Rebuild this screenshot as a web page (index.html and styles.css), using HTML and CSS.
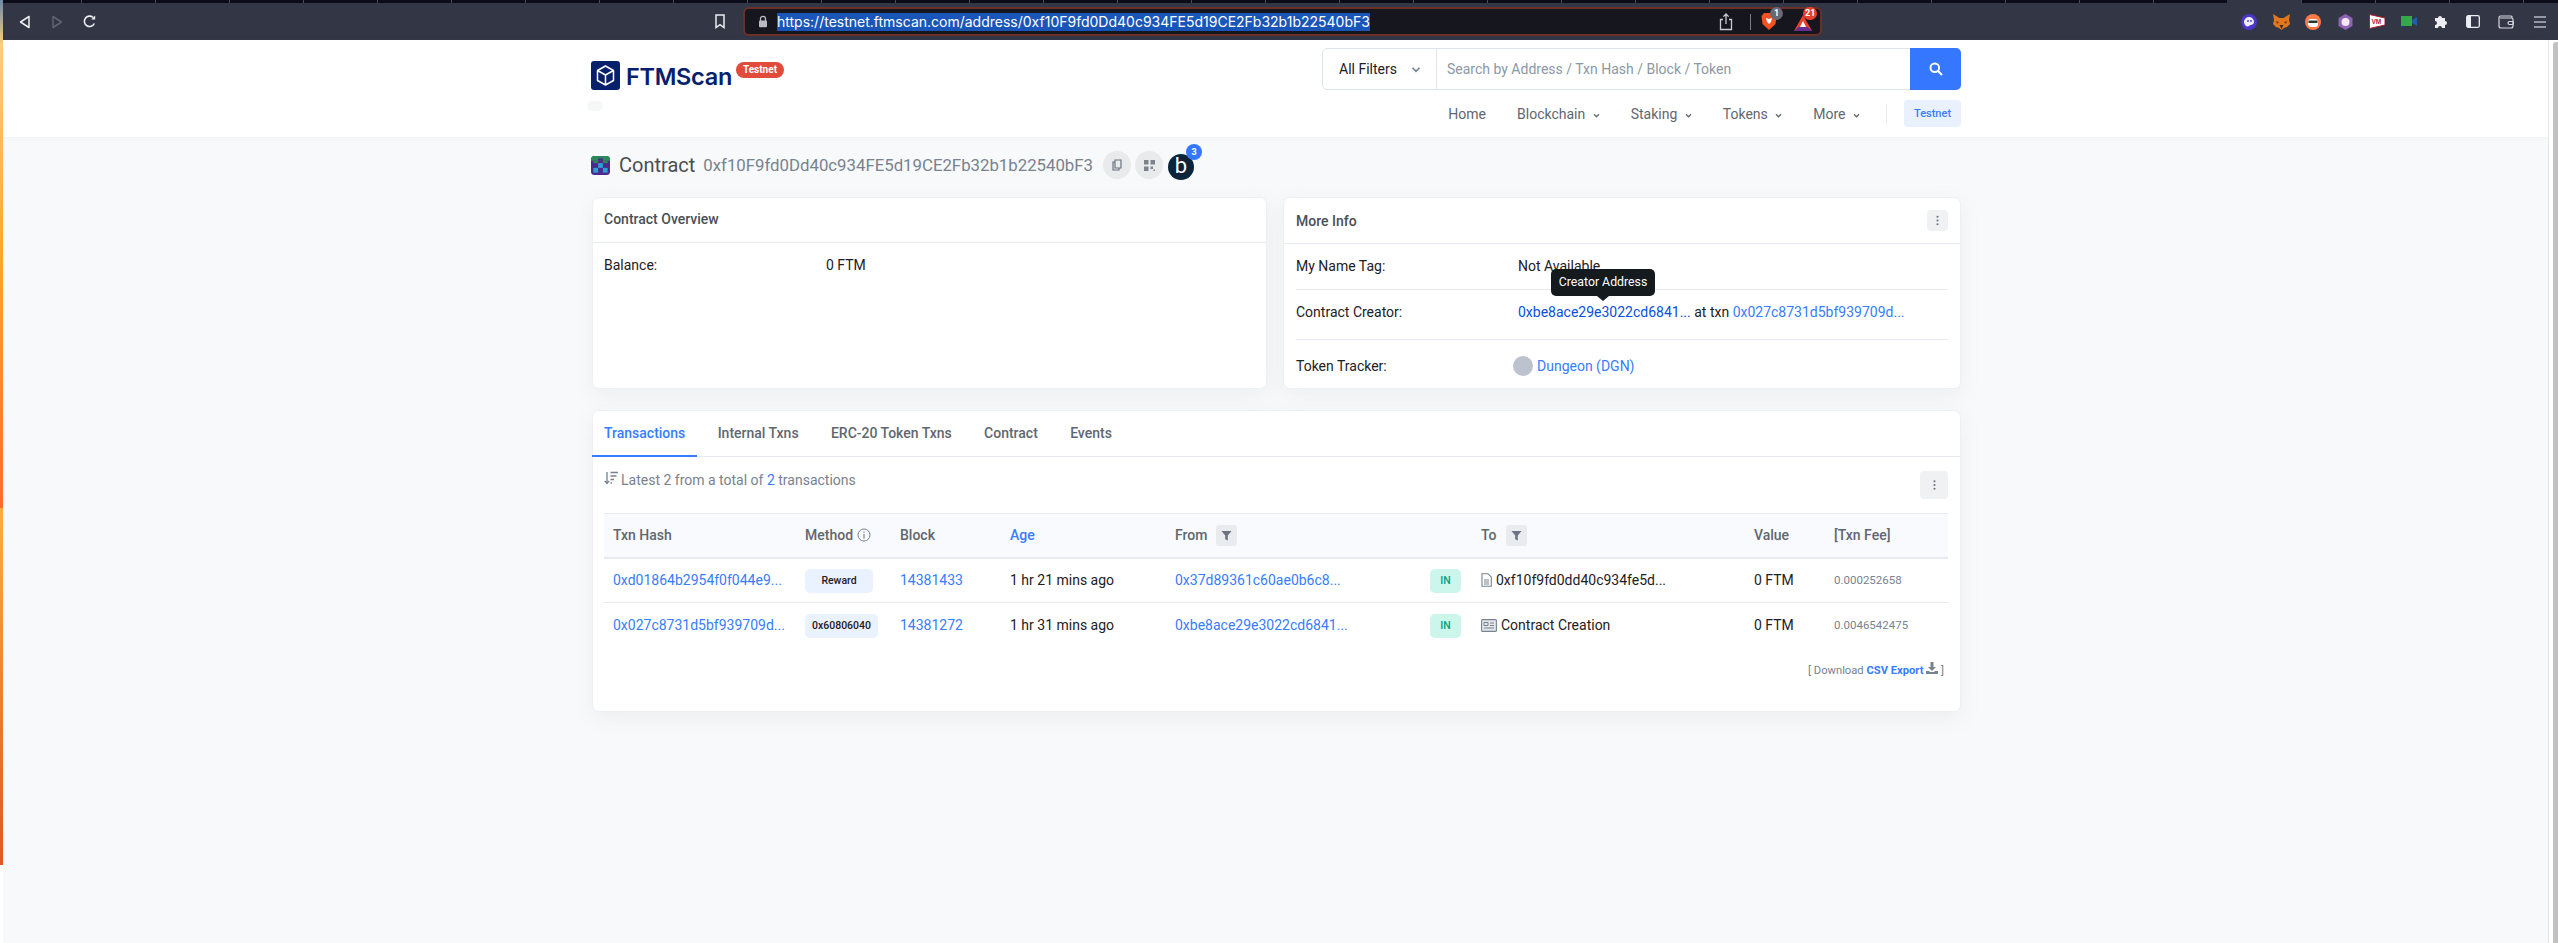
FILE: index.html
```html
<!DOCTYPE html>
<html lang="en">
<head>
  <meta charset="UTF-8">
  <title>FTMScan Testnet - Contract</title>
  <link rel="stylesheet" href="styles.css">
</head>
<body>
  <svg class="defs" width="0" height="0">
    <symbol id="chev" viewBox="0 0 8 6"><path d="M1 1.5l3 3 3-3" fill="none" stroke="currentColor" stroke-width="1.5"/></symbol>
    <symbol id="kebab" viewBox="0 0 4 14"><circle cx="2" cy="2" r="1.4" fill="currentColor"/><circle cx="2" cy="7" r="1.4" fill="currentColor"/><circle cx="2" cy="12" r="1.4" fill="currentColor"/></symbol>
    <symbol id="filter" viewBox="0 0 12 12"><path d="M.5 1h11L7.4 6v5.5L4.6 10V6z" fill="currentColor"/></symbol>
  </svg>

  <div class="wallpaper"></div>

  <div class="browser">
    <!-- browser chrome -->
    <div class="tabstrip"><div class="tab-active"></div></div>
    <div class="toolbar">
      <button class="tool-btn"><svg width="14" height="14" viewBox="0 0 14 14"><path d="M11 1.5v11L2.5 7z" fill="none" stroke="#eceef2" stroke-width="1.5" stroke-linejoin="round"/></svg></button>
      <button class="tool-btn"><svg width="14" height="14" viewBox="0 0 14 14"><path d="M3 1.5v11L11.5 7z" fill="none" stroke="#5f6372" stroke-width="1.5" stroke-linejoin="round"/></svg></button>
      <button class="tool-btn"><svg width="15" height="15" viewBox="0 0 15 15"><path d="M12.3 9.5A5.2 5.2 0 1 1 11 3.4" fill="none" stroke="#eceef2" stroke-width="1.6"/><path d="M9.2 5.4h4V1.6z" fill="#eceef2"/></svg></button>
      <button class="tool-btn bookmark"><svg width="12" height="15" viewBox="0 0 12 15"><path d="M2 1h8v12.5L6 10.6 2 13.5z" fill="none" stroke="#eceef2" stroke-width="1.5"/></svg></button>

      <div class="urlbar">
        <svg class="lock" width="10" height="13" viewBox="0 0 10 13"><path d="M2.5 6V3.8a2.5 2.5 0 0 1 5 0V6" fill="none" stroke="#b9bcc5" stroke-width="1.3"/><rect x="1" y="5.6" width="8" height="6.6" rx="1" fill="#b9bcc5"/></svg>
        <span class="url-text">https://testnet.ftmscan.com/address/0xf10F9fd0Dd40c934FE5d19CE2Fb32b1b22540bF3</span>
        <svg class="url-share" width="14" height="18" viewBox="0 0 14 18"><path d="M4 6.5H1.5v10h11v-10H10" fill="none" stroke="#c9ccd3" stroke-width="1.3"/><path d="M7 1v10M4.4 3.6L7 1l2.6 2.6" fill="none" stroke="#c9ccd3" stroke-width="1.3"/></svg>
        <span class="url-sep"></span>
        <span class="shield">
          <svg width="16" height="19" viewBox="0 0 16 19"><path d="M3 1h10l2.5 3-1 8L8 18 1.500 12l-1-8z" fill="#f1521f"/><path d="M5 6l3 1 3-1-1 4-2 2-2-2z" fill="#fff"/></svg>
          <span class="count count-grey">1</span>
        </span>
        <span class="bat">
          <svg width="18" height="16" viewBox="0 0 18 16"><path d="M9 0l9 16H0z" fill="#e8402f"/><path d="M0 16l4.500-4h9l4.500 4z" fill="#662d91"/><path d="M9 6l3 6H6z" fill="#fff"/></svg>
          <span class="count count-red">21</span>
        </span>
      </div>

      <div class="extensions">
        <span class="ext"><svg width="16" height="16" viewBox="0 0 16 16"><circle cx="8" cy="8" r="8" fill="#4c35c9"/><path d="M3 8a5 5 0 0 1 10 0c0 2-2 3-3.500 3L7 12.500C5 12.500 3 10.500 3 8z" fill="#f2f0ff"/><circle cx="7" cy="7" r=".9" fill="#4c35c9"/><circle cx="10" cy="7" r=".9" fill="#4c35c9"/></svg></span>
        <span class="ext"><svg width="17" height="16" viewBox="0 0 17 16"><path d="M0 0l6.500 4h4L17 0l-1 6 1 4-3 3-3 1-2.500 2L6 14l-3-1-3-3 1-4z" fill="#e2761b"/><path d="M6.500 11h4L8.500 15z" fill="#33302b"/><path d="M3 7l3 1-2 2zM14 7l-3 1 2 2z" fill="#763d16"/></svg></span>
        <span class="ext"><svg width="16" height="16" viewBox="0 0 16 16"><circle cx="8" cy="8" r="8" fill="#ff7a45"/><rect x="3" y="5" width="10" height="8" rx="3" fill="#fff"/><rect x="3.500" y="6.500" width="9" height="2.500" fill="#33302b"/></svg></span>
        <span class="ext"><svg width="15" height="16" viewBox="0 0 15 16"><path d="M7.500 0l7 4v8l-7 4-7-4V4z" fill="#8e63b5"/><circle cx="7.500" cy="8" r="4" fill="#f3e8f3"/></svg></span>
        <span class="ext"><svg width="16" height="15" viewBox="0 0 16 15"><path d="M.5.500L16 4v7L.5 14.500z" fill="#fff" stroke="#b01c2e"/><text x="2.500" y="10" class="vm-text">VM</text></svg></span>
        <span class="ext"><svg width="16" height="14" viewBox="0 0 16 14"><rect x="0" y="1" width="11" height="10" fill="#34a84a"/><path d="M11 5l5-3v9l-5-3z" fill="#1f5fa8"/><path d="M0 11v3l3-3z" fill="#1b3f8a"/></svg></span>
        <span class="ext"><svg width="15" height="15" viewBox="0 0 15 15"><path d="M1 4h3a2 2 0 1 1 4 0h3v3a2 2 0 1 1 0 4v3H8a2 2 0 1 0-4 0H1v-3a2 2 0 1 0 0-4z" fill="#eceef2"/></svg></span>
        <span class="ext"><svg width="14" height="13" viewBox="0 0 14 13"><rect x=".7" y=".7" width="12.600" height="11.600" rx="1.500" fill="none" stroke="#eceef2" stroke-width="1.300"/><rect x="1" y="1" width="4" height="11" fill="#eceef2"/></svg></span>
        <span class="ext ext-wide"><svg width="16" height="14" viewBox="0 0 16 14"><path d="M14 3V2a1 1 0 0 0-1-1H2.500A1.500 1.500 0 0 0 1 2.500V11a2 2 0 0 0 2 2h10a2 2 0 0 0 2-2V4.500A1.500 1.500 0 0 0 13.500 3H2" fill="none" stroke="#d6d8de" stroke-width="1.200"/><rect x="10" y="6.500" width="5.500" height="3" rx="1.500" fill="none" stroke="#d6d8de" stroke-width="1.200"/></svg></span>
        <span class="ext ext-wide"><svg width="14" height="12" viewBox="0 0 14 12"><path d="M1 1h12M1 6h12M1 11h12" stroke="#b6b9c2" stroke-width="1.500"/></svg></span>
      </div>
    </div>

    <div class="viewport">
      <div class="page">
        <!-- site header -->
        <header class="site-header">
          <div class="site-header-inner">
            <div class="brand-col">
              <div class="brand">
                <svg class="brand-mark" width="29" height="29" viewBox="0 0 29 29"><rect width="29" height="29" rx="3" fill="#07206b"/><path d="M14.500 5l8 4.500v10l-8 4.500-8-4.500v-10zM6.500 9.500l8 4.500 8-4.500M14.500 14v10" fill="none" stroke="#fff" stroke-width="1.500" stroke-linejoin="round"/></svg>
                <span class="brand-name">FTMScan</span>
                <span class="brand-badge">Testnet</span>
              </div>
              <div class="brand-dot"></div>
            </div>

            <div class="header-right">
              <div class="search">
                <div class="search-filter">All Filters <svg class="chev-lg" width="10" height="7"><use href="#chev"/></svg></div>
                <div class="search-input">Search by Address / Txn Hash / Block / Token</div>
                <div class="search-btn"><svg width="14" height="14" viewBox="0 0 14 14"><circle cx="5.800" cy="5.800" r="4.300" fill="none" stroke="#fff" stroke-width="2"/><path d="M9 9l4 4" stroke="#fff" stroke-width="2"/></svg></div>
              </div>
              <nav class="nav">
                <a class="nav-link">Home</a>
                <a class="nav-link">Blockchain <svg width="7" height="5"><use href="#chev"/></svg></a>
                <a class="nav-link">Staking <svg width="7" height="5"><use href="#chev"/></svg></a>
                <a class="nav-link">Tokens <svg width="7" height="5"><use href="#chev"/></svg></a>
                <a class="nav-link">More <svg width="7" height="5"><use href="#chev"/></svg></a>
                <span class="nav-sep"></span>
                <a class="nav-net">Testnet</a>
              </nav>
            </div>
          </div>
        </header>

        <main class="main">
          <div class="title-row">
            <svg class="identicon" width="19" height="19" viewBox="0 0 8 8"><defs><clipPath id="idc"><rect width="8" height="8" rx="1.500"/></clipPath></defs><g clip-path="url(#idc)"><rect width="8" height="8" fill="#4a2a8f"/><rect x="0" y="0" width="8" height="2" fill="#2c8a5a"/><rect x="1" y="2" width="2" height="1" fill="#2c8a5a"/><rect x="5" y="2" width="2" height="1" fill="#2c8a5a"/><rect x="3" y="3" width="2" height="2" fill="#2f9fd0"/><rect x="1" y="5" width="2" height="2" fill="#2f9fd0"/><rect x="5" y="5" width="2" height="2" fill="#2f9fd0"/><rect x="3" y="1" width="2" height="1" fill="#4a2a8f"/></g></svg>
            <h1 class="title">Contract</h1>
            <span class="title-addr">0xf10F9fd0Dd40c934FE5d19CE2Fb32b1b22540bF3</span>
            <span class="round-btn round-first"><svg width="10" height="12" viewBox="0 0 10 12"><path d="M3 1h6v8H3zM3 3H1v8h6V9" fill="none" stroke="#6b7280" stroke-width="1.200"/></svg></span>
            <span class="round-btn"><svg width="11" height="11" viewBox="0 0 11 11"><path d="M0 0h4.500v4.500H0zM6.500 0H11v4.500H6.500zM0 6.500h4.500V11H0zM6.500 6.500H9V9H6.500zM9.500 9.500H11V11H9.500z" fill="#7b828c"/></svg></span>
            <span class="blockscan">b<span class="blockscan-count">3</span></span>
          </div>

          <div class="cards">
            <section class="card">
              <div class="card-head card-head-over"><h2 class="card-title">Contract Overview</h2></div>
              <div class="info-row info-plain"><span class="info-label">Balance:</span><span>0 FTM</span></div>
            </section>

            <section class="card card-more">
              <div class="card-head card-head-more">
                <h2 class="card-title">More Info</h2>
                <span class="icon-btn icon-btn-sm"><svg width="3" height="11"><use href="#kebab"/></svg></span>
              </div>
              <div class="info-row info-tag"><span class="info-label">My Name Tag:</span><span>Not Available</span></div>
              <div class="info-row info-creator">
                <span class="info-label">Contract Creator:</span>
                <span class="creator-val">
                  <a class="link-hover">0xbe8ace29e3022cd6841...</a> at txn <a class="link">0x027c8731d5bf939709d...</a>
                  <span class="tooltip">Creator Address</span>
                </span>
              </div>
              <div class="info-row info-token">
                <span class="info-label">Token Tracker:</span>
                <span class="token-val"><span class="token-icon"></span><a class="link">Dungeon (DGN)</a></span>
              </div>
            </section>
          </div>

          <section class="card card-tx">
            <div class="tabs">
              <a class="tab tab-on">Transactions</a>
              <a class="tab">Internal Txns</a>
              <a class="tab">ERC-20 Token Txns</a>
              <a class="tab">Contract</a>
              <a class="tab">Events</a>
            </div>

            <div class="tx-top">
              <div class="tx-summary">
                <svg width="14" height="14" viewBox="0 0 14 14"><path d="M3 1v11M.8 9.800L3 12.500l2.200-2.700" fill="none" stroke="#77838f" stroke-width="1.300"/><path d="M6.500 1.500H14M6.500 5H12.500M6.500 8.500H10M6.500 12H8" stroke="#77838f" stroke-width="1.300"/></svg>
                <span>Latest 2 from a total of <a class="link">2</a> transactions</span>
              </div>
              <span class="icon-btn"><svg width="3" height="12"><use href="#kebab"/></svg></span>
            </div>

            <table class="tx-table">
              <colgroup>
                <col class="c-hash"><col class="c-method"><col class="c-block"><col class="c-age"><col class="c-from"><col class="c-dir"><col class="c-to"><col class="c-value"><col class="c-fee">
              </colgroup>
              <thead>
                <tr>
                  <th>Txn Hash</th>
                  <th>Method <svg class="info-ic" width="14" height="14" viewBox="0 0 14 14"><circle cx="7" cy="7" r="6" fill="none" stroke="#77838f"/><path d="M7 6v4.500M7 3.500v1.300" stroke="#77838f" stroke-width="1.200"/></svg></th>
                  <th>Block</th>
                  <th class="th-link">Age</th>
                  <th><span class="th-flex">From <span class="filter-btn"><svg width="11" height="11"><use href="#filter"/></svg></span></span></th>
                  <th></th>
                  <th><span class="th-flex">To <span class="filter-btn"><svg width="11" height="11"><use href="#filter"/></svg></span></span></th>
                  <th>Value</th>
                  <th>[Txn Fee]</th>
                </tr>
              </thead>
              <tbody>
                <tr>
                  <td><a class="link">0xd01864b2954f0f044e9...</a></td>
                  <td><span class="pill">Reward</span></td>
                  <td><a class="link">14381433</a></td>
                  <td>1 hr 21 mins ago</td>
                  <td><a class="link">0x37d89361c60ae0b6c8...</a></td>
                  <td><span class="dir">IN</span></td>
                  <td><svg class="to-ic" width="11" height="14" viewBox="0 0 11 14"><path d="M1 .7h6l3.300 3.300v9.300H1z" fill="none" stroke="#77838f" stroke-width="1.100"/><path d="M3 7h5M3 9h5M3 11h5" stroke="#77838f"/></svg>0xf10f9fd0dd40c934fe5d...</td>
                  <td>0 FTM</td>
                  <td class="fee">0.000252658</td>
                </tr>
                <tr>
                  <td><a class="link">0x027c8731d5bf939709d...</a></td>
                  <td><span class="pill">0x60806040</span></td>
                  <td><a class="link">14381272</a></td>
                  <td>1 hr 31 mins ago</td>
                  <td><a class="link">0xbe8ace29e3022cd6841...</a></td>
                  <td><span class="dir">IN</span></td>
                  <td><svg class="to-ic" width="16" height="13" viewBox="0 0 16 13"><rect x=".6" y=".6" width="14.800" height="11.800" rx="1" fill="#e4e6ea" stroke="#77838f" stroke-width="1.100"/><path d="M3 3.500h4v3H3zM9 4h4M9 6.500h4M3 9h10" stroke="#77838f" fill="none"/></svg>Contract Creation</td>
                  <td>0 FTM</td>
                  <td class="fee">0.0046542475</td>
                </tr>
              </tbody>
            </table>

            <div class="tx-foot">[ Download <a class="link link-bold">CSV Export</a> <svg width="12" height="12" viewBox="0 0 12 12"><path d="M4.500 0h3v5H10L6 9 2 5h2.500zM0 9h3l1 1h4l1-1h3v3H0z" fill="#77838f"/></svg> ]</div>
          </section>
        </main>
      </div>

      <div class="scrollbar"><div class="scroll-thumb"></div></div>
    </div>
  </div>
</body>
</html>
```

FILE: styles.css
```css
* {
  box-sizing: border-box;
}
html, body {
  height: 100%;
}
body {
  margin: 0;
  display: flex;
  overflow: hidden;
  background-color: #fff;
  color: #1e2022;
  font-family: 'Roboto', 'Liberation Sans', sans-serif;
  font-size: 14px;
}
a {
  text-decoration: none;
}
h1, h2 {
  margin: 0;
}
.defs {
  position: absolute;
}

/* desktop wallpaper peeking out on the left */
.wallpaper {
  flex: 0 0 3px;
  height: 865px;
  background: linear-gradient(180deg, #6f8aa8 0, #ffcf7d 45px, #ffa62c 250px, #ff6b2a 508px, #ffad3c 508px, #e0581f 865px);
}
.browser {
  flex: 1;
  min-width: 0;
  display: flex;
  flex-direction: column;
}

/* browser chrome */
.tabstrip {
  height: 3px;
  padding-left: 2224px;
  background-color: #0c0c18;
  background-image: repeating-linear-gradient(90deg, transparent 0, transparent 73px, #4b4b57 73px, #4b4b57 74px);
  background-position: 5px 0;
}
.tab-active {
  width: 74px;
  height: 3px;
  background-color: #323645;
}
.toolbar {
  height: 37px;
  display: flex;
  align-items: center;
  padding: 0 1px 0 6px;
  background-color: #323645;
}
.tool-btn {
  width: 32px;
  height: 32px;
  padding: 0;
  display: flex;
  align-items: center;
  justify-content: center;
  background: none;
  border: none;
}
.bookmark {
  margin-left: 599px;
}
.urlbar {
  position: relative;
  width: 1079px;
  height: 29px;
  margin-left: 7px;
  display: flex;
  align-items: center;
  padding-left: 13px;
  background-color: #16161f;
  border: 2px solid #6b3129;
  border-radius: 6px;
}
.url-text {
  margin-left: 9px;
  padding: 1px 0;
  height: 18px;
  line-height: 16px;
  font-family: 'Inter', sans-serif;
  font-size: 14px;
  color: #fff;
  background-color: #1a56b8;
}
.url-share {
  margin-left: auto;
}
.url-sep {
  width: 1px;
  height: 16px;
  margin: 0 10px 0 17px;
  background-color: #7a7c85;
}
.shield, .bat {
  position: relative;
  display: flex;
}
.bat {
  margin: 2px 8px 0 17px;
}
.count {
  position: absolute;
  top: -5px;
  height: 13px;
  min-width: 13px;
  padding: 0 2px;
  border-radius: 7px;
  color: #fff;
  font-size: 9px;
  font-weight: 700;
  line-height: 13px;
  text-align: center;
}
.count-grey {
  left: 9px;
  background-color: #676a75;
}
.count-red {
  left: 9px;
  top: -8px;
  background-color: #e8402f;
}
.extensions {
  display: flex;
  align-items: center;
  margin-left: auto;
}
.ext {
  width: 32px;
  display: flex;
  justify-content: center;
}
.ext-wide {
  width: 34px;
}
.vm-text {
  font-family: 'Liberation Sans', sans-serif;
  font-size: 6.500px;
  font-weight: 700;
  fill: #b01c2e;
}

.viewport {
  flex: 1;
  min-height: 0;
  display: flex;
}
.page {
  flex: 1;
  min-width: 0;
  background-color: #f8f9fa;
}
.scrollbar {
  flex: 0 0 10px;
  padding: 2px 0 0 4px;
  background-color: #fff;
  border-left: 1px solid #e4e4e4;
}
.scroll-thumb {
  height: 100%;
  background-color: #c1c1c1;
  border-radius: 3px 0 0 0;
}

/* site header */
.site-header {
  height: 97px;
  background-color: #fff;
  box-shadow: 0 1px 6px rgba(140, 152, 164, 0.08);
}
.site-header-inner {
  display: flex;
  justify-content: space-between;
  width: 1370px;
  margin-left: 588px;
  padding-top: 8px;
}
.brand-col {
  padding-top: 13px;
}
.brand {
  display: flex;
  align-items: flex-start;
}
.brand-name {
  margin-left: 6px;
  padding-top: 1px;
  font-family: 'Inter', sans-serif;
  font-size: 23.500px;
  font-weight: 600;
  letter-spacing: -0.3px;
  line-height: 29px;
  color: #07206b;
}
.brand-badge {
  margin: 1px 0 0 4px;
  width: 48px;
  height: 16px;
  background-color: #e14b3b;
  border-radius: 8px;
  color: #fff;
  font-size: 10px;
  font-weight: 700;
  line-height: 16px;
  text-align: center;
}
.brand-dot {
  width: 16px;
  height: 10px;
  margin: 10px 0 0 -4px;
  background-color: #f6f8f8;
  border-radius: 5px;
}
.header-right {
  width: 639px;
}
.search {
  display: flex;
  height: 42px;
  background-color: #fff;
  border: 1px solid #dfe3ea;
  border-radius: 5px;
}
.search-filter {
  width: 114px;
  display: flex;
  align-items: center;
  justify-content: space-between;
  padding: 0 15px 0 16px;
  border-right: 1px solid #e1e4ea;
}
.chev-lg {
  color: #77838f;
}
.search-input {
  flex: 1;
  padding-left: 10px;
  color: #8c98a4;
  line-height: 40px;
}
.search-btn {
  width: 51px;
  margin: -1px;
  display: flex;
  align-items: center;
  justify-content: center;
  background-color: #3578ff;
  border-radius: 0 5px 5px 0;
}
.nav {
  display: flex;
  align-items: center;
  justify-content: flex-end;
  height: 27px;
  margin-top: 10px;
  gap: 31px;
}
.nav-link {
  color: #5f6770;
}
.nav-link svg {
  margin-left: 4px;
  vertical-align: 1px;
}
.nav-sep {
  width: 1px;
  height: 20px;
  margin-left: -5px;
  background-color: #e7eaf3;
}
.nav-net {
  width: 57px;
  height: 27px;
  margin-left: -14px;
  background-color: #e9f1ff;
  border-radius: 4px;
  color: #377dff;
  font-size: 11px;
  font-weight: 500;
  line-height: 27px;
  text-align: center;
}

/* main column */
.main {
  width: 1369px;
  margin-left: 589px;
  padding-top: 7px;
}
.title-row {
  display: flex;
  align-items: center;
  height: 42px;
  margin-bottom: 11px;
}
.identicon {
  margin-left: -1px;
}
.title {
  margin-left: 9px;
  font-size: 20px;
  font-weight: 400;
  color: #4a4f55;
}
.title-addr {
  margin-left: 8px;
  font-size: 16.800px;
  color: #77838f;
}
.round-btn {
  width: 28px;
  height: 28px;
  margin-left: 4px;
  display: flex;
  align-items: center;
  justify-content: center;
  background-color: #e9eaec;
  border-radius: 50%;
}
.round-first {
  margin-left: 10px;
}
.blockscan {
  position: relative;
  width: 26px;
  height: 26px;
  margin: 4px 0 0 5px;
  background-color: #0b2439;
  border-radius: 50%;
  color: #fff;
  font-size: 22px;
  font-weight: 400;
  line-height: 24px;
  text-align: center;
}
.blockscan-count {
  position: absolute;
  top: -10px;
  left: 18px;
  width: 16px;
  height: 16px;
  background-color: #3578ff;
  border-radius: 50%;
  font-size: 9px;
  font-weight: 700;
  line-height: 16px;
}

.cards {
  display: grid;
  grid-template-columns: 675px 678px;
  gap: 16px;
  margin-bottom: 21px;
}
.card {
  height: 192px;
  background-color: #fff;
  border: 1px solid #eef0f6;
  border-radius: 7px;
  box-shadow: 0 6px 20px rgba(140, 152, 164, 0.11);
}
.card-more {
  position: relative;
}
.card-head {
  height: 45px;
  padding: 0 12px 0 11px;
  display: flex;
  align-items: center;
  justify-content: space-between;
  border-bottom: 1px solid #e7eaf3;
}
.card-head-over {
  padding-bottom: 2px;
}
.card-head-more {
  height: 46px;
  padding-left: 12px;
}
.card-title {
  font-size: 14px;
  font-weight: 500;
  color: #4a4f55;
}
.info-row {
  display: flex;
  line-height: 22px;
  margin: 0 12px;
  padding-top: 11px;
}
.info-plain {
  margin-left: 11px;
}
.info-label {
  flex: 0 0 222px;
}
.info-tag {
  height: 46px;
  border-bottom: 1px solid #e7eaf3;
}
.info-creator {
  height: 50px;
  border-bottom: 1px solid #e7eaf3;
}
.info-token {
  padding-top: 15px;
}
.creator-val {
  position: relative;
}
.link {
  color: #377dff;
}
.link-hover {
  color: #0a4fdc;
}
.link-bold {
  font-weight: 700;
}
.tooltip {
  position: absolute;
  left: 33px;
  top: -32px;
  width: 104px;
  height: 27px;
  background-color: #141a1d;
  border-radius: 5px;
  color: #fff;
  font-size: 12.300px;
  line-height: 27px;
  text-align: center;
}
.tooltip::after {
  content: "";
  position: absolute;
  left: 46px;
  top: 27px;
  border: 6px solid transparent;
  border-top: 5px solid #141a1d;
  border-bottom: 0;
}
.token-val {
  display: flex;
  align-items: center;
  margin-left: -5px;
}
.token-icon {
  width: 20px;
  height: 20px;
  margin-right: 4px;
  background-color: #bcc3cf;
  border-radius: 50%;
}
.icon-btn {
  width: 28px;
  height: 28px;
  display: flex;
  align-items: center;
  justify-content: center;
  background-color: #f0f1f3;
  border-radius: 4px;
  color: #6b7280;
}
.icon-btn-sm {
  width: 21px;
  height: 21px;
}

/* transactions card */
.card-tx {
  height: 302px;
}
.tabs {
  display: flex;
  height: 46px;
  margin-left: -1px;
  border-bottom: 1px solid #e7eaf3;
}
.tab {
  height: 46px;
  margin-right: 8.300px;
  padding: 0 12px;
  color: #5f6770;
  font-size: 14px;
  font-weight: 500;
  line-height: 44px;
}
.tab-on {
  color: #377dff;
  border-bottom: 2px solid #377dff;
}
.tx-top {
  display: flex;
  justify-content: space-between;
  margin: 14px 12px 14px 11px;
}
.tx-summary {
  display: flex;
  align-items: flex-start;
  gap: 3px;
  color: #77838f;
  font-size: 14px;
  line-height: 18px;
}
.tx-table {
  width: 1344px;
  margin-left: 11px;
  border-collapse: collapse;
  table-layout: fixed;
}
.c-hash { width: 192px; }
.c-method { width: 95px; }
.c-block { width: 110px; }
.c-age { width: 165px; }
.c-from { width: 255px; }
.c-dir { width: 51px; }
.c-to { width: 273px; }
.c-value { width: 80px; }
.c-fee { width: 123px; }
.tx-table th {
  height: 44px;
  padding: 0 9px;
  background-color: #f8fafd;
  border-top: 1px solid #e7eaf3;
  border-bottom: 2px solid #e7eaf3;
  color: #5f6770;
  font-size: 14px;
  font-weight: 500;
  text-align: left;
}
.tx-table .th-link {
  color: #377dff;
}
.th-flex {
  display: flex;
  align-items: center;
  gap: 9px;
}
.info-ic {
  vertical-align: -2px;
}
.filter-btn {
  width: 21px;
  height: 21px;
  display: flex;
  align-items: center;
  justify-content: center;
  background-color: #e9ebee;
  border-radius: 3px;
  color: #6b7280;
}
.tx-table td {
  height: 45px;
  padding: 0 9px;
  white-space: nowrap;
}
.tx-table tbody tr:first-child td {
  border-bottom: 1px solid #e7eaf3;
}
.pill, .dir {
  display: inline-block;
  height: 24px;
  margin-top: 2px;
  border-radius: 5px;
  font-size: 10.500px;
  font-weight: 500;
  line-height: 24px;
  text-align: center;
}
.pill {
  min-width: 68px;
  padding: 0 7px;
  background-color: #eaf1ff;
  color: #1e2022;
}
.dir {
  width: 31px;
  background-color: #ccf5ec;
  color: #00a186;
}
.to-ic {
  margin-right: 4px;
  vertical-align: -2px;
}
.tx-table .fee {
  color: #77838f;
  font-size: 11.500px;
}
.tx-foot {
  margin: 14px 16px 0 0;
  color: #77838f;
  font-size: 11.200px;
  text-align: right;
}
```
